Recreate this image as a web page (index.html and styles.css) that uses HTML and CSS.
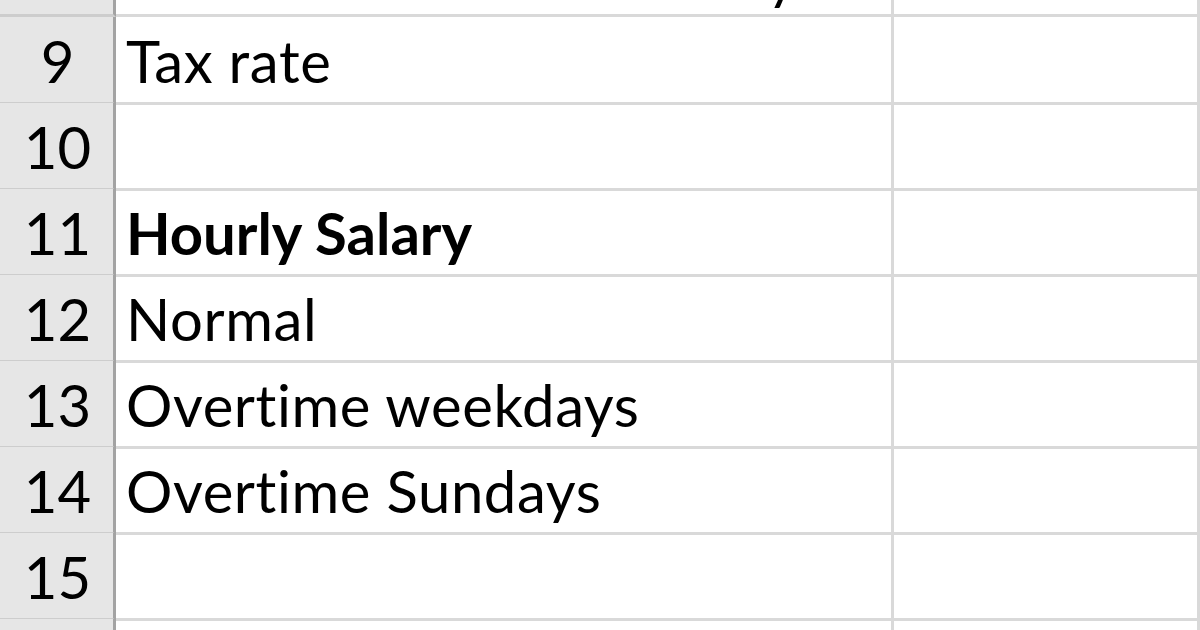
FILE: index.html
```html
<!DOCTYPE html>
<html>
<head>
<meta charset="utf-8">
<link rel="stylesheet" href="styles.css">
</head>
<body>
<div class="sheet">
  <div class="row row-partial">
    <div class="hdr"></div>
    <div class="cell cell-clip"><span class="clip-text">Number of hours monthly</span></div>
    <div class="cell"></div>
  </div>
  <div class="row"><div class="hdr">9</div><div class="cell">Tax rate</div><div class="cell"></div></div>
  <div class="row"><div class="hdr">10</div><div class="cell"></div><div class="cell"></div></div>
  <div class="row"><div class="hdr">11</div><div class="cell bold">Hourly Salary</div><div class="cell"></div></div>
  <div class="row"><div class="hdr">12</div><div class="cell">Normal</div><div class="cell"></div></div>
  <div class="row"><div class="hdr">13</div><div class="cell">Overtime weekdays</div><div class="cell"></div></div>
  <div class="row"><div class="hdr">14</div><div class="cell">Overtime Sundays</div><div class="cell"></div></div>
  <div class="row"><div class="hdr">15</div><div class="cell"></div><div class="cell"></div></div>
  <div class="row"><div class="hdr"></div><div class="cell"></div><div class="cell"></div></div>
</div>
</body>
</html>
```

FILE: styles.css
```css
html, body {
  margin: 0;
  padding: 0;
  background: #ffffff;
  overflow: hidden;
}
.sheet {
  width: 1200px;
  height: 630px;
  overflow: hidden;
  font-family: Lato, "Open Sans", sans-serif;
  font-size: 58px;
  letter-spacing: 0.6px;
  color: #000;
}
.row {
  display: grid;
  grid-template-columns: 116px 778px 306px;
  height: 86px;
}
.row-partial {
  height: 17px;
}
.hdr {
  background: #e6e6e6;
  border-right: 3px solid #a3a3a3;
  border-bottom: 3px solid #cdcdcd;
  text-align: center;
  line-height: 83px;
  padding-top: 2px;
  padding-left: 2px;
  box-sizing: border-box;
  letter-spacing: 0;
}
.cell {
  border-right: 3px solid #d9d9d9;
  border-bottom: 3px solid #d9d9d9;
  padding-left: 10px;
  padding-top: 2px;
  line-height: 83px;
  box-sizing: border-box;
  white-space: nowrap;
  overflow: hidden;
}
.cell-clip {
  position: relative;
  padding: 0;
}
.clip-text {
  position: absolute;
  left: 12px;
  bottom: 9px;
  line-height: 58px;
}
.bold {
  font-weight: 700;
  letter-spacing: 0;
}
```
